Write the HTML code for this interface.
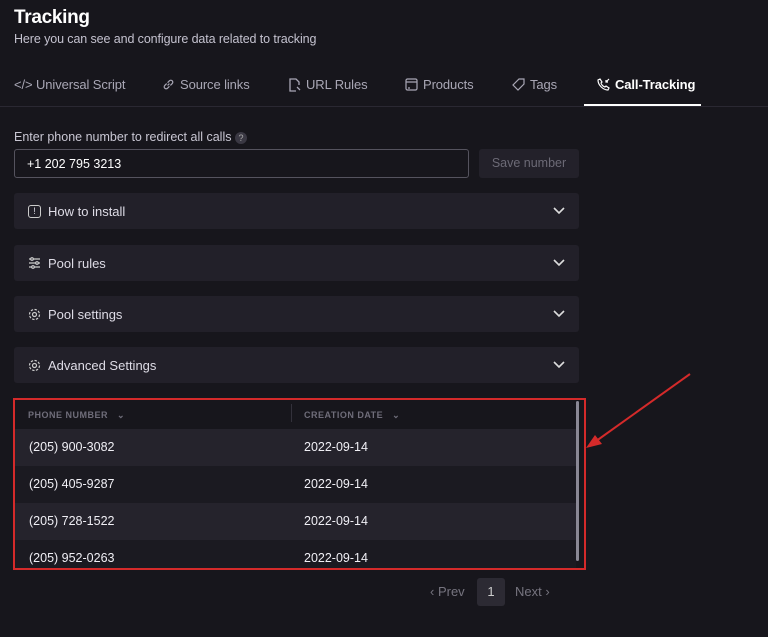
<!DOCTYPE html><html><head><style>
body{margin:0;width:768px;height:637px;background:#17161c;font-family:"Liberation Sans",sans-serif;color:#e8e7ee;position:relative;overflow:hidden}
.a{position:absolute}
.t{font-size:13px;letter-spacing:-0.1px;color:#a9a7b5;top:77px;display:flex;align-items:center;gap:5px}
.acc{position:absolute;left:14px;width:565px;height:36px;background:#222029;border-radius:3px;font-size:13px;display:flex;align-items:center;box-sizing:border-box;padding-left:14px;color:#dedce6}
.acc svg.c{position:absolute;right:14px}
.row{position:absolute;left:15px;width:561px;height:37px;font-size:12.5px;color:#f0eff5}
.row span{position:absolute;top:11px}
</style></head><body>
<div class="a" style="left:14px;top:7px;font-size:19px;font-weight:bold;color:#fff;letter-spacing:-0.3px">Tracking</div>
<div class="a" style="left:14px;top:32px;font-size:12.5px;color:#c4c2cf;letter-spacing:-0.1px">Here you can see and configure data related to tracking</div>
<div class="a t" style="left:14px">&lt;/&gt; Universal Script</div>
<div class="a t" style="left:162px"><svg width="13" height="13" viewBox="0 0 14 14" fill="none" stroke="#a9a7b5" stroke-width="1.3"><path d="M6 8l2-2M5 6L3 8a2 2 0 003 3l2-2M9 8l2-2a2 2 0 00-3-3L6 5"/></svg>Source links</div>
<div class="a t" style="left:288px"><svg width="13" height="14" viewBox="0 0 13 14" fill="none" stroke="#a9a7b5" stroke-width="1.3"><path d="M8 13H2V1h6l3 3v3M9 9l3 3"/></svg>URL Rules</div>
<div class="a t" style="left:405px"><svg width="13" height="13" viewBox="0 0 13 13" fill="none" stroke="#a9a7b5" stroke-width="1.2"><rect x="1" y="1" width="11" height="11" rx="1.5"/><path d="M1 4h11M3 10h2"/></svg>Products</div>
<div class="a t" style="left:512px"><svg width="13" height="13" viewBox="0 0 13 13" fill="none" stroke="#a9a7b5" stroke-width="1.2"><path d="M7 1h5v5l-6 6-5-5z"/></svg>Tags</div>
<div class="a t" style="left:597px;color:#fff;font-weight:bold"><svg width="13" height="13" viewBox="0 0 13 13" fill="none" stroke="#fff" stroke-width="1.2"><path d="M3 1l2 3-1 1a6 6 0 004 4l1-1 3 2-1 2C6 12 1 7 1 2zM12 1L9 4M9 2v2h2"/></svg>Call-Tracking</div>
<div class="a" style="left:0;top:106px;width:768px;height:1px;background:#2a2832"></div>
<div class="a" style="left:584px;top:104px;width:117px;height:2px;background:#fff"></div>
<div class="a" style="left:14px;top:130px;font-size:12.5px;color:#c9c7d3">Enter phone number to redirect all calls <span style="display:inline-block;width:12px;height:12px;border-radius:50%;background:#3a3843;font-size:9px;text-align:center;line-height:12px;color:#aaa">?</span></div>
<div class="a" style="left:14px;top:149px;width:455px;height:29px;border:1px solid #55535e;border-radius:3px;box-sizing:border-box;font-size:12.5px;padding:7px 12px;color:#fff">+1 202 795 3213</div>
<div class="a" style="left:479px;top:149px;width:100px;height:29px;background:#23212a;border-radius:3px;font-size:12.5px;color:#6c6a76;text-align:center;line-height:29px">Save number</div>
<div class="acc" style="top:193px"><span style="display:inline-block;width:11px;height:11px;border:1.3px solid #ccc;border-radius:3px;font-size:9px;text-align:center;line-height:11px;margin-right:7px">!</span>How to install<svg class="c" width="12" height="8" viewBox="0 0 12 8" fill="none" stroke="#ddd" stroke-width="1.6"><path d="M1 1l5 5 5-5"/></svg></div>
<div class="acc" style="top:245px"><svg width="13" height="12" viewBox="0 0 13 12" fill="none" stroke="#ccc" stroke-width="1.2" style="margin-right:7px"><path d="M1 2h11M1 6h11M1 10h11"/><circle cx="4" cy="2" r="1.3" fill="#222029"/><circle cx="9" cy="6" r="1.3" fill="#222029"/><circle cx="5" cy="10" r="1.3" fill="#222029"/></svg>Pool rules<svg class="c" width="12" height="8" viewBox="0 0 12 8" fill="none" stroke="#ddd" stroke-width="1.6"><path d="M1 1l5 5 5-5"/></svg></div>
<div class="acc" style="top:296px"><svg width="13" height="13" viewBox="0 0 13 13" fill="none" stroke="#ccc" stroke-width="1.2" style="margin-right:7px"><circle cx="6.5" cy="6.5" r="2"/><circle cx="6.5" cy="6.5" r="5" stroke-dasharray="2.5 1.4"/></svg>Pool settings<svg class="c" width="12" height="8" viewBox="0 0 12 8" fill="none" stroke="#ddd" stroke-width="1.6"><path d="M1 1l5 5 5-5"/></svg></div>
<div class="acc" style="top:347px"><svg width="13" height="13" viewBox="0 0 13 13" fill="none" stroke="#ccc" stroke-width="1.2" style="margin-right:7px"><circle cx="6.5" cy="6.5" r="2"/><circle cx="6.5" cy="6.5" r="5" stroke-dasharray="2.5 1.4"/></svg>Advanced Settings<svg class="c" width="12" height="8" viewBox="0 0 12 8" fill="none" stroke="#ddd" stroke-width="1.6"><path d="M1 1l5 5 5-5"/></svg></div>
<div class="a" style="left:15px;top:400px;width:561px;height:30px;font-size:9px;color:#6f6d7a;letter-spacing:.5px;font-weight:bold">
<span class="a" style="left:13px;top:10px">PHONE NUMBER &nbsp; ⌄</span>
<span class="a" style="left:276px;top:4px;width:1px;height:18px;background:#33313b"></span>
<span class="a" style="left:289px;top:10px">CREATION DATE &nbsp; ⌄</span></div>
<div class="row" style="top:429px;background:#25232c"><span style="left:14px">(205) 900-3082</span><span style="left:289px">2022-09-14</span></div>
<div class="row" style="top:466px;background:#1b1a21"><span style="left:14px">(205) 405-9287</span><span style="left:289px">2022-09-14</span></div>
<div class="row" style="top:503px;background:#25232c"><span style="left:14px">(205) 728-1522</span><span style="left:289px">2022-09-14</span></div>
<div class="row" style="top:540px;height:29px;background:#1b1a21"><span style="left:14px">(205) 952-0263</span><span style="left:289px">2022-09-14</span></div>
<div class="a" style="left:576px;top:401px;width:3px;height:160px;background:#8a8895;border-radius:2px"></div>
<div class="a" style="left:13px;top:398px;width:573px;height:172px;border:2px solid #d42a2a;box-sizing:border-box"></div>
<svg class="a" style="left:580px;top:368px" width="120" height="90"><path d="M110 6L12 76" stroke="#d42a2a" stroke-width="2"/><path d="M6 80l16-4-7-9z" fill="#d42a2a"/></svg>
<div class="a" style="left:430px;top:584px;font-size:13px;color:#76747f">‹ Prev</div>
<div class="a" style="left:477px;top:578px;width:28px;height:28px;background:#2c2a33;border-radius:3px;text-align:center;line-height:28px;font-size:13px;color:#ccc">1</div>
<div class="a" style="left:515px;top:584px;font-size:13px;color:#76747f">Next ›</div>
</body></html>
